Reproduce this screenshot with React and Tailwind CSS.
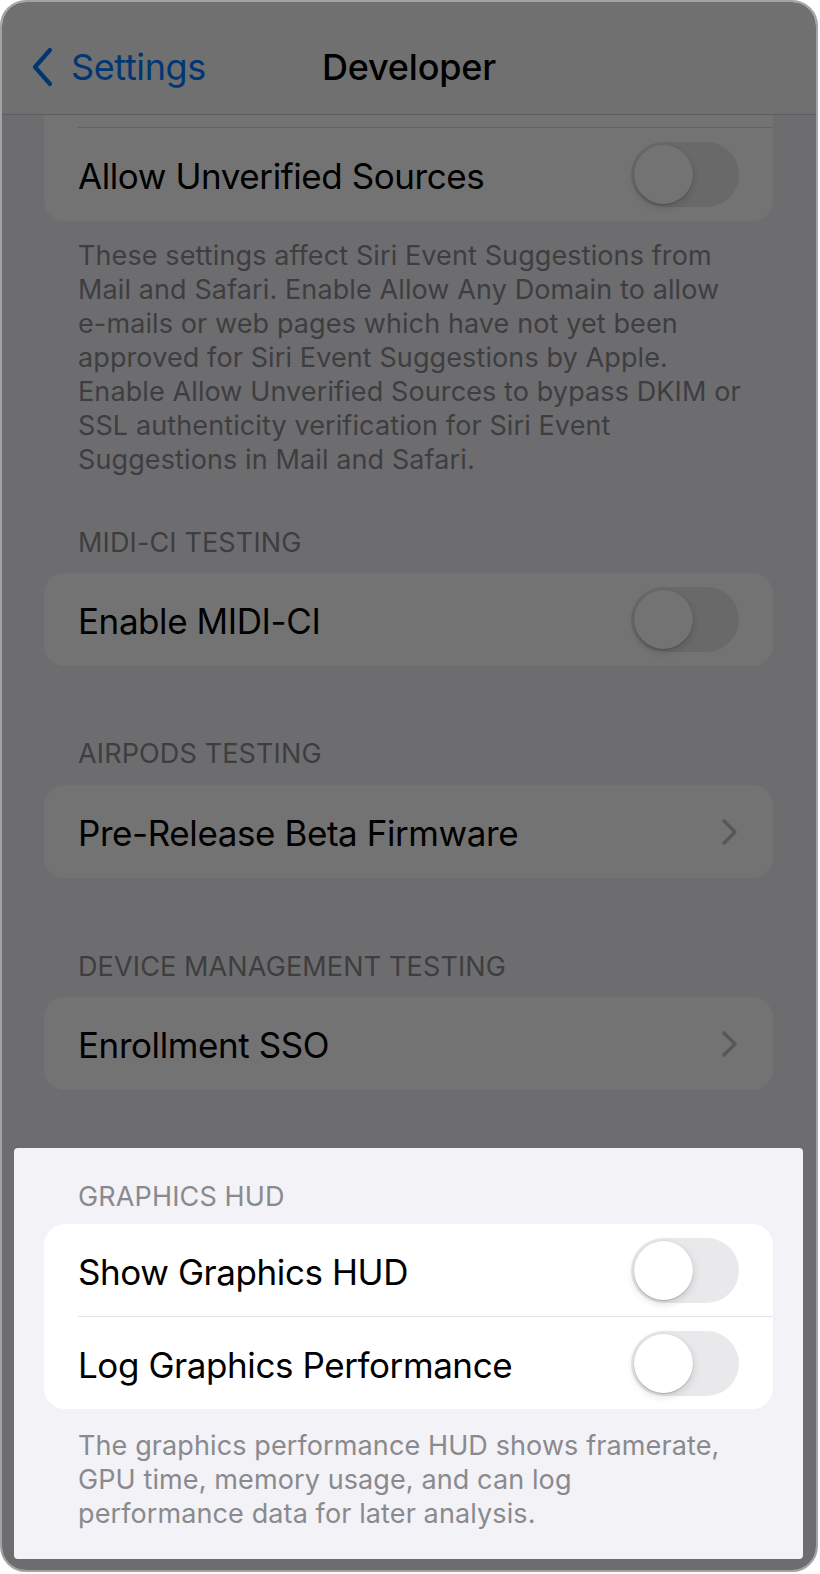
import React from "react";

const Toggle = () => (
  <div className="w-[108px] h-[65px] rounded-full bg-[#e9e9eb] p-[3px] flex items-center">
    <div className="w-[59px] h-[59px] rounded-full bg-white shadow-[0_3px_8px_rgba(0,0,0,0.15),0_1px_1px_rgba(0,0,0,0.16),0_0_0_0.5px_rgba(0,0,0,0.04)]" />
  </div>
);

const Chevron = () => (
  <svg width="18" height="28" viewBox="0 0 18 28" fill="none">
    <path d="M3 3 L14 14 L3 25" stroke="#c4c4c7" strokeWidth="3.6" strokeLinecap="round" strokeLinejoin="round" />
  </svg>
);

const Header = ({ children, className = "" }) => (
  <div className={"pl-[36px] text-[27px] leading-[34px] text-[#8a8a8e] uppercase tracking-[0.005em] whitespace-nowrap " + className}>
    {children}
  </div>
);

const Label = ({ children }) => (
  <span className="pt-[4px] text-[35px] text-black tracking-[-0.012em] whitespace-nowrap">{children}</span>
);

const Row = ({ label, right, h = "h-[93px]" }) => (
  <div className={h + " flex items-center justify-between pl-[34px] pr-[34px]"}>
    <Label>{label}</Label>
    {right}
  </div>
);

const Footer = ({ lines, className = "" }) => (
  <div className={"pl-[36px] text-[27px] leading-[34px] text-[#8a8a8e] tracking-[0.004em] " + className}>
    {lines.map((l, i) => (
      <div key={i} className="whitespace-nowrap">{l}</div>
    ))}
  </div>
);

export default function App() {
  return (
    <div className="w-[820px] h-[1574px] bg-white">
      <div className="relative w-[818px] h-[1572px] rounded-[26px] border-2 border-[#a3a3a5] overflow-hidden bg-[#f2f2f7] font-['Inter','Noto_Sans',sans-serif]">
        {/* Nav bar */}
        <div className="h-[113px] bg-[#f8f8f8] border-b border-[#d0d0d3] flex items-center relative pt-[17px]">
          <div className="flex items-center pl-[28px]">
            <svg width="26" height="40" viewBox="0 0 26 40" fill="none">
              <path d="M20 3 L5 20 L20 37" stroke="#007aff" strokeWidth="4.2" strokeLinecap="round" strokeLinejoin="round" />
            </svg>
            <span className="ml-[15px] text-[36px] text-[#007aff] tracking-[-0.01em]">Settings</span>
          </div>
          <div className="absolute inset-x-0 top-0 h-full flex items-center justify-center pt-[17px]">
            <span className="text-[36px] font-medium text-black tracking-[-0.005em]">Developer</span>
          </div>
        </div>

        {/* Scroll content */}
        <div className="ml-[42px] w-[729px] bg-white rounded-b-[21px]">
          <div className="h-[12px]" />
          <div className="ml-[34px] h-px bg-[#d9d9dc]" />
          <Row label="Allow Unverified Sources" right={<Toggle />} />
        </div>
        <Footer
          className="ml-[40px] pt-[18px]"
          lines={[
            "These settings affect Siri Event Suggestions from",
            "Mail and Safari. Enable Allow Any Domain to allow",
            "e-mails or web pages which have not yet been",
            "approved for Siri Event Suggestions by Apple.",
            "Enable Allow Unverified Sources to bypass DKIM or",
            "SSL authenticity verification for Siri Event",
            "Suggestions in Mail and Safari.",
          ]}
        />

        <Header className="ml-[40px] mt-[49px] mb-[13px]">MIDI-CI Testing</Header>
        <div className="ml-[42px] w-[729px] bg-white rounded-[21px]">
          <Row label="Enable MIDI-CI" right={<Toggle />} />
        </div>

        <Header className="ml-[40px] mt-[71px] mb-[14px]">AirPods Testing</Header>
        <div className="ml-[42px] w-[729px] bg-white rounded-[21px]">
          <Row label="Pre-Release Beta Firmware" right={<Chevron />} />
        </div>

        <Header className="ml-[40px] mt-[72px] mb-[13px]">Device Management Testing</Header>
        <div className="ml-[42px] w-[729px] bg-white rounded-[21px]">
          <Row label="Enrollment SSO" right={<Chevron />} />
        </div>

        {/* Dim overlay */}
        <div className="absolute inset-0 bg-black/55 z-10" />

        {/* Highlighted section */}
        <div className="relative z-20 mt-[58px] ml-[12px] w-[789px] bg-[#f2f2f7] rounded-[4px] pt-[32px] pb-[28px]">
          <Header className="ml-[28px] mb-[10px]">Graphics HUD</Header>
          <div className="ml-[30px] w-[729px] bg-white rounded-[21px]">
            <Row h="h-[92px]" label="Show Graphics HUD" right={<Toggle />} />
            <div className="ml-[34px] h-px bg-[#e3e3e6]" />
            <Row h="h-[92px]" label="Log Graphics Performance" right={<Toggle />} />
          </div>
          <Footer
            className="ml-[28px] pt-[20px]"
            lines={[
              "The graphics performance HUD shows framerate,",
              "GPU time, memory usage, and can log",
              "performance data for later analysis.",
            ]}
          />
        </div>
      </div>
    </div>
  );
}
